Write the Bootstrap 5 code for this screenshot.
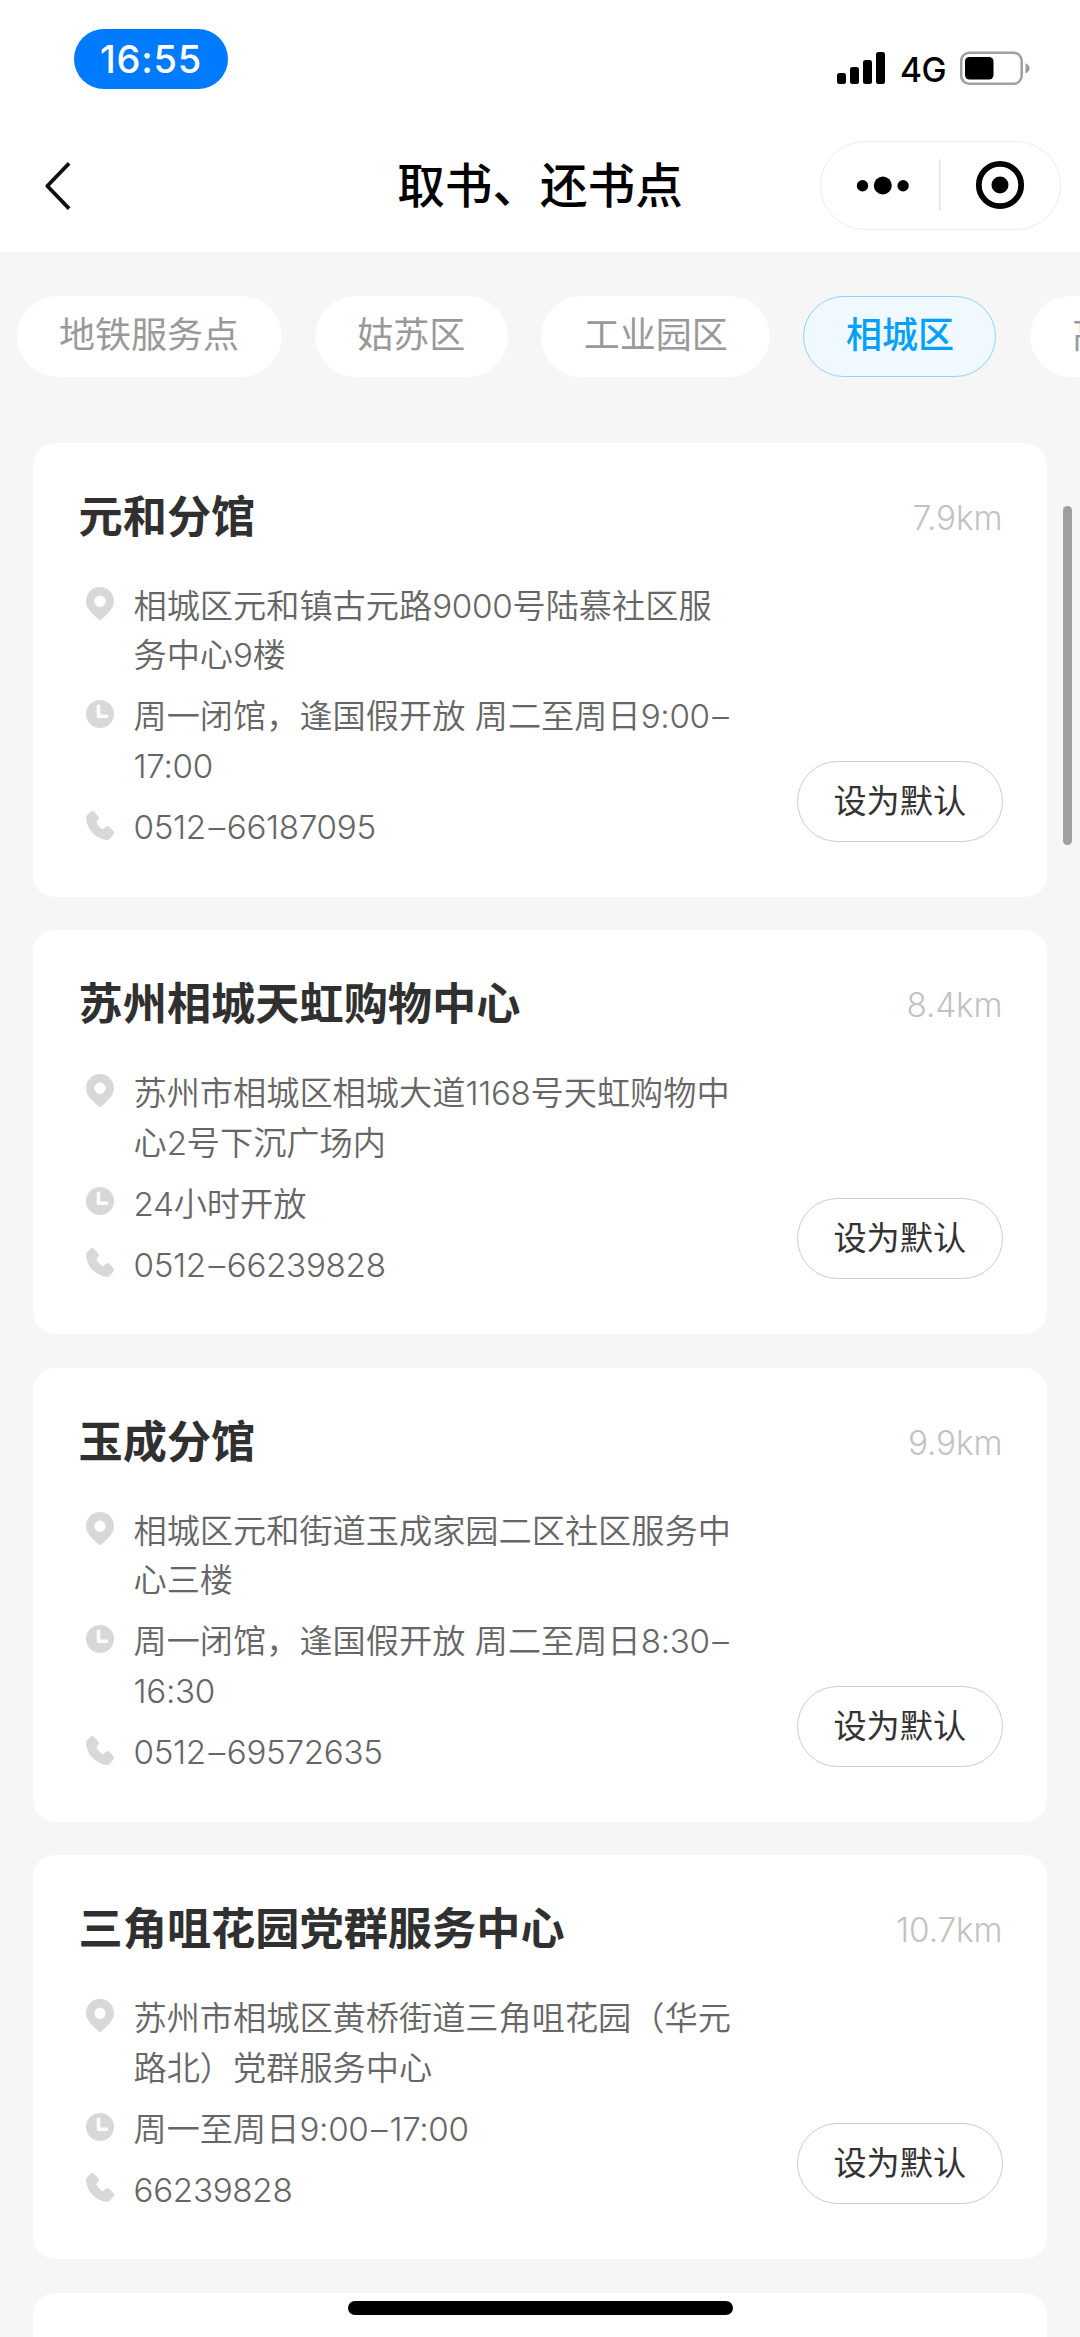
<!DOCTYPE html>
<html lang="zh-CN">
<head>
<meta charset="utf-8">
<meta name="viewport" content="width=device-width, initial-scale=1">
<title>取书、还书点</title>
<link href="https://cdn.jsdelivr.net/npm/bootstrap@5.3.0/dist/css/bootstrap.min.css" rel="stylesheet">
<style>
  html, body { height: 100%; overflow: hidden; }
  body { font-family: Inter, "Noto Sans CJK SC", sans-serif; background: #f6f6f6; color: #333; }
  .screen { width: 1080px; height: 2337px; overflow: hidden; }
  .topbar { height: 252px; }
  .statusbar { height: 141px; padding: 29px 50px 0 74px; }
  .clock-pill { width: 154px; height: 60px; background: #007aff; font-size: 38px; font-weight: 500; line-height: 61px; letter-spacing: .8px; }
  .status-icons { margin-top: 22px; height: 34px; }
  .net { font-size: 33.5px; font-weight: 500; line-height: 34px; width: 46px; margin: 2px 14px 0 14px; letter-spacing: -.6px; }
  .titlebar { height: 89px; padding: 0 19px; }
  .back-icon { margin-left: 24px; }
  .page-title { font-size: 47.6px; font-weight: 500; line-height: 88px; padding-top: 1px; }
  .side { flex: 1 1 0; }
  .capsule { width: 241px; height: 89px; border: 1.5px solid #ececec; }
  .tabs { height: 190.5px; padding: 44px 0 0 16.5px; gap: 33.3px; }
  .tab-pill { flex: none; height: 80.5px; padding: 0 41.5px; border: 1.5px solid #fff; background: #fff; color: #999; font-size: 36px; line-height: 76px; white-space: nowrap; }
  .tab-pill.on { color: #00a0ff; background: #f0f9ff; border-color: #8dd3fd; font-weight: 500; }
  .places { padding: 0 33px; gap: 33.3px; }
  .place { border: 0; border-radius: 22px; padding: 39px 44.5px 44px 45.5px; flex: none; }
  .place-name { font-size: 44.2px; font-weight: 600; line-height: 70px; color: #303030; margin: 0 0 30px; }
  .dist { font-size: 33.3px; font-weight: 300; line-height: 72px; height: 70px; color: #c2c2c2; letter-spacing: -.1px; }
  .infos { gap: 11.1px; font-size: 33.2px; line-height: 49.8px; color: #666; font-weight: 350; }
  .info { padding-left: 7px; gap: 20px; white-space: nowrap; }
  .info svg { flex: none; margin-top: 7.8px; }
  .info svg.pin { margin-top: 5.2px; }
  .num { letter-spacing: -.3px; }
  .dash { padding: 0 2px 0 2.500px; }
  .btn-default { width: 205.5px; height: 81px; border: 1.5px solid #ccc; color: #333; background: #fff; font-size: 33.2px; line-height: 75px; padding: 0; margin-bottom: 11px; }
  .scroll-thumb { right: 8px; top: 506px; width: 9px; height: 339px; background: #9f9f9f; }
  .home-bar { left: 348px; top: 2301px; width: 385px; height: 14px; background: #000; }
</style>
</head>
<body>
<svg class="d-none">
  <symbol id="i-pin" viewBox="0 0 28 33"><path fill="#d8d8d8" fill-rule="evenodd" d="M14 0C6.2 0 0 6.2 0 14c0 4.600 2.300 8 5.300 11.400l7 6.900c1 .9 2.400.9 3.400 0l7-6.900C25.700 22 28 18.600 28 14 28 6.200 21.800 0 14 0Zm0 8.600a5.700 5.700 0 1 1 0 11.400 5.700 5.700 0 0 1 0-11.400Z"/></symbol>
  <symbol id="i-clock" viewBox="0 0 28 28"><circle cx="14" cy="14" r="14" fill="#d8d8d8"/><path d="M12.500 6.300v9.900h8" fill="none" stroke="#fff" stroke-width="3.600" stroke-linecap="round" stroke-linejoin="round"/></symbol>
  <symbol id="i-phone" viewBox="0 0 28 29"><path fill="#d8d8d8" d="M4.600.8c1-1 2.500-1 3.500 0l4.200 4.700c.9 1 .8 2.300 0 3.300L11 10.300c-.5.600-.5 1.300-.1 2 1.200 2.300 2.700 4 4.700 5.500.7.500 1.500.5 2.100-.1l2.100-2c1-.9 2.300-.9 3.300 0l4.200 4.400c1 1 1 2.500.1 3.500l-3.800 4.500c-.6.600-1.400.9-2.300.8C9.600 27.700.6 18.500 0 6.700c0-.8.200-1.500.8-2.100Z"/></symbol>
</svg>
<div class="screen position-relative d-flex flex-column">
  <header class="topbar bg-white flex-shrink-0">
    <div class="statusbar d-flex justify-content-between align-items-start">
      <div class="clock-pill rounded-pill text-white text-center">16:55</div>
      <div class="status-icons d-flex">
        <svg width="49" height="34" viewBox="0 0 49 34"><rect x="0" y="22" width="9" height="11" rx="2.500"/><rect x="13" y="16" width="9" height="17" rx="2.500"/><rect x="26" y="9" width="9" height="24" rx="2.500"/><rect x="39" y="1" width="9" height="32" rx="2.500"/></svg>
        <span class="net text-black">4G</span>
        <svg width="70" height="34" viewBox="0 0 70 34"><rect x="1.200" y="1.700" width="60.500" height="31" rx="8" fill="none" stroke="#a0a0a0" stroke-width="2.500"/><rect x="5" y="6" width="28.500" height="22.500" rx="4.500"/><path d="M65.500 12.300q4 1.500 4 5t-4 5Z" fill="#999"/></svg>
      </div>
    </div>
    <div class="titlebar d-flex align-items-center">
      <div class="side"><svg class="back-icon" width="30" height="50" viewBox="0 0 30 50" fill="none" stroke="#111" stroke-width="3.800" stroke-linejoin="round" stroke-linecap="square"><path d="M24.800 3.700 4.300 25l20.500 21.300"/></svg></div>
      <h1 class="page-title text-black mb-0">取书、还书点</h1>
      <div class="side d-flex justify-content-end">
        <div class="capsule rounded-pill">
          <svg class="d-block" width="238" height="86" viewBox="1.500 1.500 238 86"><circle cx="43" cy="45.300" r="5.700"/><circle cx="63.300" cy="45" r="9"/><circle cx="83.600" cy="45.300" r="5.700"/><path d="M120.200 18.700V70" stroke="#e3e3e3" stroke-width="1.500"/><circle cx="180.500" cy="44.500" r="21.200" fill="none" stroke="#000" stroke-width="5.800"/><circle cx="180.500" cy="44.500" r="8.500"/></svg>
        </div>
      </div>
    </div>
  </header>
  <nav class="tabs d-flex align-items-start overflow-hidden flex-shrink-0">
    <a class="tab-pill rounded-pill text-decoration-none">地铁服务点</a>
    <a class="tab-pill rounded-pill text-decoration-none">姑苏区</a>
    <a class="tab-pill rounded-pill text-decoration-none">工业园区</a>
    <a class="tab-pill on rounded-pill text-decoration-none">相城区</a>
    <a class="tab-pill rounded-pill text-decoration-none">高新区</a>
  </nav>
  <main class="places d-flex flex-column">
    <section class="card place">
      <div class="d-flex justify-content-between"><h2 class="place-name">元和分馆</h2><span class="dist">7.9km</span></div>
      <div class="d-flex justify-content-between align-items-end">
        <div class="infos d-flex flex-column">
          <div class="info d-flex align-items-start"><svg class="pin" width="28" height="33"><use href="#i-pin"/></svg><div>相城区元和镇古元路<span class="num">9000</span>号陆慕社区服<br>务中心<span class="num">9</span>楼</div></div>
          <div class="info d-flex align-items-start"><svg width="28" height="28"><use href="#i-clock"/></svg><div>周一闭馆，逢国假开放 周二至周日<span class="num">9:00<span class="dash">–</span><br>17:00</span></div></div>
          <div class="info d-flex align-items-start"><svg width="28" height="29"><use href="#i-phone"/></svg><div class="num">0512<span class="dash">–</span>66187095</div></div>
        </div>
        <button class="btn btn-default rounded-pill">设为默认</button>
      </div>
    </section>
    <section class="card place">
      <div class="d-flex justify-content-between"><h2 class="place-name">苏州相城天虹购物中心</h2><span class="dist">8.4km</span></div>
      <div class="d-flex justify-content-between align-items-end">
        <div class="infos d-flex flex-column">
          <div class="info d-flex align-items-start"><svg class="pin" width="28" height="33"><use href="#i-pin"/></svg><div>苏州市相城区相城大道<span class="num">1168</span>号天虹购物中<br>心<span class="num">2</span>号下沉广场内</div></div>
          <div class="info d-flex align-items-start"><svg width="28" height="28"><use href="#i-clock"/></svg><div><span class="num">24</span>小时开放</div></div>
          <div class="info d-flex align-items-start"><svg width="28" height="29"><use href="#i-phone"/></svg><div class="num">0512<span class="dash">–</span>66239828</div></div>
        </div>
        <button class="btn btn-default rounded-pill">设为默认</button>
      </div>
    </section>
    <section class="card place">
      <div class="d-flex justify-content-between"><h2 class="place-name">玉成分馆</h2><span class="dist">9.9km</span></div>
      <div class="d-flex justify-content-between align-items-end">
        <div class="infos d-flex flex-column">
          <div class="info d-flex align-items-start"><svg class="pin" width="28" height="33"><use href="#i-pin"/></svg><div>相城区元和街道玉成家园二区社区服务中<br>心三楼</div></div>
          <div class="info d-flex align-items-start"><svg width="28" height="28"><use href="#i-clock"/></svg><div>周一闭馆，逢国假开放 周二至周日<span class="num">8:30<span class="dash">–</span><br>16:30</span></div></div>
          <div class="info d-flex align-items-start"><svg width="28" height="29"><use href="#i-phone"/></svg><div class="num">0512<span class="dash">–</span>69572635</div></div>
        </div>
        <button class="btn btn-default rounded-pill">设为默认</button>
      </div>
    </section>
    <section class="card place">
      <div class="d-flex justify-content-between"><h2 class="place-name">三角咀花园党群服务中心</h2><span class="dist">10.7km</span></div>
      <div class="d-flex justify-content-between align-items-end">
        <div class="infos d-flex flex-column">
          <div class="info d-flex align-items-start"><svg class="pin" width="28" height="33"><use href="#i-pin"/></svg><div>苏州市相城区黄桥街道三角咀花园（华元<br>路北）党群服务中心</div></div>
          <div class="info d-flex align-items-start"><svg width="28" height="28"><use href="#i-clock"/></svg><div>周一至周日<span class="num">9:00<span class="dash">–</span>17:00</span></div></div>
          <div class="info d-flex align-items-start"><svg width="28" height="29"><use href="#i-phone"/></svg><div class="num">66239828</div></div>
        </div>
        <button class="btn btn-default rounded-pill">设为默认</button>
      </div>
    </section>
    <section class="card place"></section>
  </main>
  <div class="scroll-thumb position-absolute rounded-pill"></div>
  <div class="home-bar position-absolute rounded-pill"></div>
</div>
<script src="https://cdn.jsdelivr.net/npm/bootstrap@5.3.0/dist/js/bootstrap.bundle.min.js"></script>
</body>
</html>
